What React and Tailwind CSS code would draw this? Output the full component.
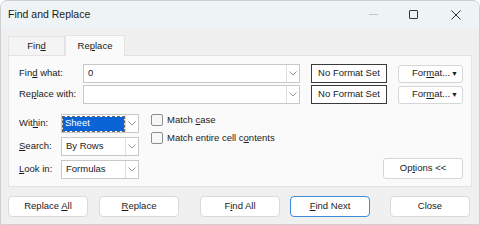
import React from 'react';

const font = { fontFamily: '"Liberation Sans", Arial, sans-serif' };

// underline the access key letter
const Key = ({ children }) => <span className="underline underline-offset-[1px]">{children}</span>;

const Chevron = () => (
    <svg width="8" height="5" viewBox="0 0 8 5" className="text-[#8a8a8a]">
        <path d="M0.5 0.5 L4 4 L7.5 0.5" fill="none" stroke="currentColor" strokeWidth="0.9" />
    </svg>
);

const Combo = ({ value, width, selected }) => (
    <div className={`flex h-[19px] ${width} items-stretch border border-[#c8c8c8] bg-white`}>
        <div className="flex flex-1 items-center px-[1px]">
            {selected ? (
                <span className="flex h-[14px] w-full items-center bg-[#0a64d6] px-[2px] text-white outline outline-1 outline-dashed outline-[#6a6a6a]">
                    {value}
                </span>
            ) : (
                <span className="pl-[3px]">{value}</span>
            )}
        </div>
        <div className="flex w-[13px] items-center justify-center border-l border-[#dedede]">
            <Chevron />
        </div>
    </div>
);

const FormatButton = () => (
    <div className="ml-[11px] flex h-[18px] w-[65px] items-center rounded-[3px] border border-[#d6d6d6] bg-white">
        <span className="flex-1 pl-[12px] text-center">For<Key>m</Key>at...</span>
        <span className="pr-[4px] text-[7px] leading-none">▼</span>
    </div>
);

const NoFormat = () => (
    <div className="ml-[11px] flex h-[19px] w-[76px] items-center justify-center border border-[#3a3a3a] bg-white">
        No Format Set
    </div>
);

const Checkbox = ({ children }) => (
    <div className="flex h-[12px] items-center gap-[4px]">
        <div className="h-[12px] w-[12px] rounded-[2px] border border-[#8d8d8d] bg-[#f7f7f7]" />
        <span>{children}</span>
    </div>
);

const Button = ({ children, primary, className = '' }) => (
    <div
        className={`flex h-[21px] w-[80px] items-center justify-center rounded-[4px] bg-white ${
            primary ? 'border border-[#3f8ad8]' : 'border border-[#dadada]'
        } ${className}`}
    >
        <span>{children}</span>
    </div>
);

export default function App() {
    return (
        <div
            style={font}
            className="flex h-[225px] w-[480px] flex-col overflow-hidden rounded-t-[7px] border border-[#cfcfcf] bg-[#f0f0f0] text-[9.5px] text-[#1b1b1b]"
        >
            {/* title bar */}
            <div className="flex h-[27px] shrink-0 items-center bg-[#eef4f6] pl-[7px]">
                <span className="text-[10.5px]">Find and Replace</span>
                <div className="ml-auto flex h-full items-center">
                    <div className="flex w-[40px] justify-center">
                        <div className="h-[1px] w-[9px] bg-[#c4c4c4]" />
                    </div>
                    <div className="flex w-[40px] justify-center">
                        <div className="h-[9px] w-[9px] rounded-[1px] border border-[#333]" />
                    </div>
                    <div className="flex w-[46px] justify-center">
                        <svg width="10" height="10" viewBox="0 0 10 10">
                            <path d="M0.5 0.5 L9.5 9.5 M9.5 0.5 L0.5 9.5" stroke="#333" strokeWidth="1" />
                        </svg>
                    </div>
                </div>
            </div>

            {/* tabs */}
            <div className="mt-[7px] flex h-[20px] items-end pl-[7px]">
                <div className="flex h-[19px] w-[57px] items-center justify-center border border-b-0 border-[#e3e3e3] bg-[#f4f4f4]">
                    <span>Fin<Key>d</Key></span>
                </div>
                <div className="relative z-10 -mb-[1px] flex h-[21px] w-[60px] items-center justify-center border border-b-0 border-[#e3e3e3] bg-[#fafafa]">
                    <span>Re<Key>p</Key>lace</span>
                </div>
            </div>

            {/* tab page */}
            <div className="mx-[7px] flex h-[132px] flex-col border border-[#e3e3e3] bg-[#fafafa] pl-[10px] pr-[8px] pt-[8px]">
                <div className="flex items-center">
                    <span className="w-[64px]">Fin<Key>d</Key> what:</span>
                    <Combo value="0" width="w-[217px]" />
                    <NoFormat />
                    <FormatButton />
                </div>
                <div className="mt-[2px] flex items-center">
                    <span className="w-[64px]">Re<Key>p</Key>lace with:</span>
                    <Combo value="" width="w-[217px]" />
                    <NoFormat />
                    <FormatButton />
                </div>

                <div className="mt-[10px] flex">
                    <div className="flex flex-col gap-[4px]">
                        <div className="flex items-center">
                            <span className="w-[42px]">Wit<Key>h</Key>in:</span>
                            <Combo value="Sheet" width="w-[78px]" selected />
                        </div>
                        <div className="flex items-center">
                            <span className="w-[42px]"><Key>S</Key>earch:</span>
                            <Combo value="By Rows" width="w-[78px]" />
                        </div>
                        <div className="flex items-center">
                            <span className="w-[42px]"><Key>L</Key>ook in:</span>
                            <Combo value="Formulas" width="w-[78px]" />
                        </div>
                    </div>
                    <div className="ml-[12px] flex flex-col gap-[6px]">
                        <Checkbox>Match <Key>c</Key>ase</Checkbox>
                        <Checkbox>Match entire cell c<Key>o</Key>ntents</Checkbox>
                    </div>
                    <div className="ml-auto flex items-end">
                        <div className="flex h-[21px] w-[80px] items-center justify-center rounded-[3px] border border-[#d6d6d6] bg-white">
                            <span>Op<Key>t</Key>ions &lt;&lt;</span>
                        </div>
                    </div>
                </div>
            </div>

            {/* buttons */}
            <div className="mt-[9px] flex pl-[7px]">
                <Button>Replace <Key>A</Key>ll</Button>
                <Button className="ml-[11px]"><Key>R</Key>eplace</Button>
                <Button className="ml-[21px]">F<Key>i</Key>nd All</Button>
                <Button primary className="ml-[10px]"><Key>F</Key>ind Next</Button>
                <Button className="ml-[20px]">Close</Button>
            </div>
        </div>
    );
}
